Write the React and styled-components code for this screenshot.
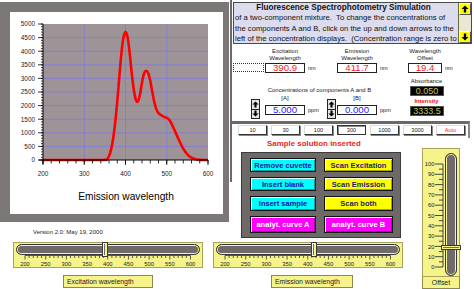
import React from "react";
import styled, { createGlobalStyle } from "styled-components";

const SANS = `"Liberation Sans", Arial, sans-serif`;

const Global = createGlobalStyle`
  html, body { margin: 0; padding: 0; background: #ffffff; }
  body { font-family: ${SANS}; color: #000; }
  * { box-sizing: border-box; }
`;

const Page = styled.div`
  width: 474px;
  height: 289px;
  overflow: hidden;
  display: grid;
  grid-template-columns: 213px 17px 181px 63px;
  grid-template-rows: 148px 92px 49px;
  grid-template-areas:
    "chart chart top top"
    "chart chart buttons offset"
    "exc em em offset";
`;

/* ---------- chart ---------- */
const ChartCell = styled.div`
  grid-area: chart;
  display: flex;
  flex-direction: column;
`;
const ChartFrame = styled.div`
  margin-top: 2px;
  width: 229px;
  height: 220px;
  background: #7b7777;
  padding: 10px 6px 8px 10px;
`;
const ChartInner = styled.div`
  width: 100%;
  height: 100%;
  background: #ffffff;
`;
const Version = styled.div`
  margin: 6px 0 0 33px;
  font: 6px/8px ${SANS};
  color: #222;
`;

const X0 = 33, X1 = 198, Y0 = 12, Y1 = 148;
const xs = (nm) => X0 + ((nm - 200) * (X1 - X0)) / 400;
const ys = (v) => Y1 - ((Y1 - Y0) * v) / 5000;

const curveData = [
  [200, 0], [340, 0], [350, 5], [355, 30], [360, 140], [365, 380], [370, 780], [375, 1380],
  [380, 2150], [385, 3050], [390, 3900], [395, 4500], [400, 4700], [405, 4520],
  [410, 3950], [415, 3200], [420, 2600], [425, 2220], [430, 2150], [435, 2400],
  [440, 2850], [445, 3180], [450, 3280], [455, 3200], [460, 2920], [465, 2500],
  [470, 2120], [475, 1860], [480, 1720], [490, 1610], [500, 1550], [505, 1490],
  [510, 1380], [520, 1060], [530, 720], [540, 420], [550, 210], [560, 85],
  [570, 25], [580, 4], [590, 0], [600, 0],
];

function smoothPath(pts) {
  const p = pts.map(([a, b]) => [xs(a), ys(b)]);
  let d = `M${p[0][0].toFixed(2)},${p[0][1].toFixed(2)}`;
  for (let i = 0; i < p.length - 1; i++) {
    const p0 = p[i - 1] || p[i];
    const p1 = p[i];
    const p2 = p[i + 1];
    const p3 = p[i + 2] || p2;
    const c1x = p1[0] + (p2[0] - p0[0]) / 6;
    const c1y = p1[1] + (p2[1] - p0[1]) / 6;
    const c2x = p2[0] - (p3[0] - p1[0]) / 6;
    const c2y = p2[1] - (p3[1] - p1[1]) / 6;
    d += ` C${c1x.toFixed(2)},${c1y.toFixed(2)} ${c2x.toFixed(2)},${c2y.toFixed(2)} ${p2[0].toFixed(2)},${p2[1].toFixed(2)}`;
  }
  return d;
}

function Chart() {
  const yMajor = [];
  for (let v = 0; v <= 5000; v += 500) yMajor.push(v);
  const yMinor = [];
  for (let v = 0; v <= 5000; v += 100) yMinor.push(v);
  const xMajor = [200, 300, 400, 500, 600];
  const xMinor = [];
  for (let n = 200; n <= 600; n += 20) xMinor.push(n);
  return (
    <svg width="213" height="202" viewBox="0 0 213 202" style={{ display: "block" }}>
      <rect x={X0} y={Y0} width={X1 - X0} height={Y1 - Y0} fill="#9e9498" />
      {yMajor.slice(1, -1).map((v) => (
        <line key={"gh" + v} x1={X0} x2={X1} y1={ys(v)} y2={ys(v)} stroke="#7d78d8" strokeWidth="0.8" />
      ))}
      {[300, 400, 500].map((n) => (
        <line key={"gv" + n} x1={xs(n)} x2={xs(n)} y1={Y0} y2={Y1} stroke="#7d78d8" strokeWidth="0.8" />
      ))}
      <path d={smoothPath(curveData)} fill="none" stroke="#ff0000" strokeWidth="2.6" strokeLinejoin="round" />
      <line x1={X0} x2={X0} y1={Y0} y2={Y1 + 4} stroke="#000" strokeWidth="1" />
      <line x1={X0 - 4} x2={X1} y1={Y1} y2={Y1} stroke="#000" strokeWidth="1" />
      {yMinor.map((v) => (
        <line key={"ym" + v} x1={X0 - 2} x2={X0} y1={ys(v)} y2={ys(v)} stroke="#000" strokeWidth="0.7" />
      ))}
      {yMajor.map((v) => (
        <line key={"yM" + v} x1={X0 - 5} x2={X0} y1={ys(v)} y2={ys(v)} stroke="#000" strokeWidth="0.8" />
      ))}
      {xMinor.map((n) => (
        <line key={"xm" + n} x1={xs(n)} x2={xs(n)} y1={Y1} y2={Y1 + 3.5} stroke="#000" strokeWidth="0.8" />
      ))}
      {xMajor.map((n) => (
        <line key={"xM" + n} x1={xs(n)} x2={xs(n)} y1={Y1} y2={Y1 + 5} stroke="#000" strokeWidth="0.8" />
      ))}
      <g fontFamily={SANS} fontSize="6.4" fill="#222">
        {yMajor.map((v) => (
          <text key={"yl" + v} x={X0 - 8} y={ys(v) + 2.3} textAnchor="end">{v}</text>
        ))}
        {xMajor.map((n) => (
          <text key={"xl" + n} x={xs(n)} y={164} textAnchor="middle">{n}</text>
        ))}
      </g>
      <text x="116" y="188" textAnchor="middle" fontFamily={SANS} fontSize="10.2" fill="#000">
        Emission wavelength
      </text>
    </svg>
  );
}

/* ---------- top right ---------- */
const TopCell = styled.div`
  grid-area: top;
  display: flex;
  flex-direction: column;
  padding-left: 3px;
  border-left: 2px solid #6d6a6a;
`;
const InfoBox = styled.div`
  margin-top: 2px;
  margin-left: -2px;
  width: 239px;
  height: 42px;
  display: flex;
  border: 1px solid #4a4a4a;
  background: #dcdcee;
`;
const InfoText = styled.div`
  flex: 1;
  overflow: hidden;
  padding-left: 1px;
  font: 7.7px/10.3px ${SANS};
  white-space: nowrap;
  color: #111;
`;
const InfoTitle = styled.div`
  font-weight: bold;
  font-size: 8.2px;
  text-align: center;
  padding-right: 6px;
`;
const ScrollBar = styled.div`
  width: 13px;
  display: flex;
  flex-direction: column;
  border-left: 1px solid #6a6a40;
  background: #ecebd2;
`;
const ScrollButton = styled.div`
  height: 12px;
  background: #ffff00;
  border: 1px solid #555;
  border-top-color: #fff;
  border-left-color: #fff;
  display: flex;
  align-items: center;
  justify-content: center;
`;
const ScrollTrack = styled.div`
  flex: 1;
  background: #e9e8d4;
`;

const Arrow = ({ down, size = 8 }) => (
  <svg width={size} height={size} viewBox="0 0 8 8" style={{ display: "block", transform: down ? "rotate(180deg)" : "none" }}>
    <path d="M4 0.5 L7.5 4 L5.2 4 L5.2 7.5 L2.8 7.5 L2.8 4 L0.5 4 Z" fill="#000" />
  </svg>
);

const ValuesArea = styled.div`
  display: flex;
  margin-top: 4px;
  margin-left: -2px;
  height: 73px;
`;
const LeftFields = styled.div`
  width: 174px;
  display: flex;
  flex-direction: column;
`;
const RightFields = styled.div`
  flex: 1;
  display: flex;
  flex-direction: column;
  padding-left: 1px;
`;
const FieldRow = styled.div`
  display: flex;
  align-items: flex-end;
`;
const DottedBox = styled.div`
  width: 31px;
  height: 9px;
  border: 1px dotted #333;
  margin-bottom: 1px;
`;
const Field = styled.div`
  display: grid;
  grid-template-columns: ${(p) => p.$box || 40}px auto;
  column-gap: 3px;
  align-items: center;
  width: ${(p) => (p.$w ? p.$w + "px" : "auto")};
  margin-left: ${(p) => p.$ml || 0}px;
`;
const FieldLabel = styled.div`
  grid-column: 1;
  justify-self: center;
  text-align: center;
  white-space: nowrap;
  font: 6px/7px ${SANS};
  color: #222;
  margin-bottom: ${(p) => p.$mb || 0}px;
`;
const ValueBox = styled.div`
  grid-column: 1;
  height: 10px;
  border: 1px solid #222;
  background: #fff;
  color: ${(p) => p.$color};
  font: 9.6px/8px ${SANS};
  text-align: center;
`;
const Unit = styled.div`
  grid-column: 2;
  font: 5.6px ${SANS};
  color: #222;
`;
const CenterNote = styled.div`
  text-align: center;
  font: 6px/8px ${SANS};
  color: #222;
  margin-top: 13px;
  padding-right: 1px;
`;
const Spinner = styled.div`
  width: 9px;
  height: 20px;
  display: flex;
  flex-direction: column;
  margin-left: ${(p) => p.$ml || 0}px;
  margin-right: ${(p) => p.$mr || 0}px;
  align-self: flex-start;
  margin-top: 4px;
`;
const SpinButton = styled.div`
  flex: 1;
  background: #e4e4e4;
  border: 1px solid #222;
  display: flex;
  align-items: center;
  justify-content: center;
  & + & { border-top: none; }
`;
const ConcRow = styled.div`
  display: flex;
  align-items: flex-start;
  margin-top: 1px;
`;
const SideLabel = styled.div`
  width: 35px;
  text-align: center;
  font: ${(p) => (p.$bold ? "bold " : "")}5.9px/7px ${SANS};
  color: ${(p) => p.$color || "#222"};
  margin-top: ${(p) => p.$mt || 0}px;
  margin-left: 1px;
`;
const Display = styled.div`
  width: 34px;
  height: 10px;
  margin-left: 2px;
  background: #000;
  border: 1px solid #555;
  color: #c8c462;
  font: 9px/8px ${SANS};
  text-align: center;
  margin-top: 1px;
`;

const RangeBar = styled.div`
  display: flex;
  gap: 4px;
  width: 240px;
  margin-left: -5px;
  padding: 1px 0 3px 6px;
  border-top: 3px solid #6b6868;
  border-left: 2px solid #6b6868;
  border-right: 2px solid #8a8787;
`;
const RangeButton = styled.div`
  width: 29px;
  height: 10px;
  background: #fff;
  border: 1px solid #333;
  border-top-color: ${(p) => (p.$pressed ? "#333" : "#ddd")};
  border-left-color: ${(p) => (p.$pressed ? "#333" : "#ddd")};
  box-shadow: ${(p) => (p.$pressed ? "inset 1px 1px 0 #888" : "1px 1px 0 #888")};
  font: 5.6px/8px ${SANS};
  color: ${(p) => (p.$red ? "#ff2020" : "#222")};
  text-align: center;
`;
const Status = styled.div`
  margin: 1px 0 0 32px;
  font: bold 7.9px/9px ${SANS};
  color: #ee1c1c;
`;

/* ---------- buttons ---------- */
const ButtonsCell = styled.div`
  grid-area: buttons;
  position: relative;
  padding: 4px 0 0 11px;
  &::before {
    content: "";
    position: absolute;
    left: 0;
    top: 0;
    width: 2px;
    height: 34px;
    background: #6d6a6a;
  }
`;
const ButtonPanel = styled.div`
  width: 160px;
  height: 86px;
  background: #6d6969;
  border: 1px solid #3d3b3b;
  display: grid;
  grid-template-columns: 66px 69px;
  grid-template-rows: 14px 14px 15px 17px;
  column-gap: 8px;
  row-gap: 5px;
  padding: 5px 0 0 8px;
`;
const ActionButton = styled.div`
  background: ${(p) => p.$bg};
  color: ${(p) => p.$fg};
  font: bold 7.5px ${SANS};
  border: 1px solid #111;
  box-shadow: inset 1px 1px 0 rgba(255, 255, 255, 0.85), inset -1px -1px 0 rgba(0, 0, 0, 0.35);
  display: flex;
  align-items: center;
  justify-content: center;
  white-space: nowrap;
`;

/* ---------- sliders ---------- */
const SLIDER_YELLOW = "#f6f38a";

const HCell = styled.div`
  grid-area: ${(p) => p.$area};
  padding: 2px 0 0 ${(p) => p.$pl}px;
  display: flex;
  flex-direction: column;
`;
const HPanel = styled.div`
  position: relative;
  width: 190px;
  height: 26px;
  background: ${SLIDER_YELLOW};
  border: 1px solid #a7a35a;
`;
const HTrack = styled.div`
  position: relative;
  margin: 1px 0 0 2px;
  width: 184px;
  height: 11px;
  border-radius: 6px;
  background: #6f6b6b;
  border: 1px solid #3a3838;
  box-shadow: inset 0 0 0 1px #f8f4a0;
`;
const HThumb = styled.div`
  position: absolute;
  top: -3px;
  width: 6px;
  height: 15px;
  background: ${SLIDER_YELLOW};
  border: 1px solid #3a3838;
  box-shadow: inset 1px 0 0 #fff;
  &::after {
    content: "";
    position: absolute;
    left: 1px;
    top: 1px;
    bottom: 1px;
    width: 1px;
    background: #6f6b6b;
  }
`;
const TabLabel = styled.div`
  margin: 7px 0 0 ${(p) => p.$ml}px;
  width: ${(p) => p.$w}px;
  height: 13px;
  background: ${SLIDER_YELLOW};
  border: 1px solid #8c8850;
  font: 6.9px/11px ${SANS};
  color: #222;
  padding-left: 3px;
  white-space: nowrap;
`;

function HScale() {
  const ticks = [];
  for (let n = 200; n <= 600; n += 10) ticks.push(n);
  const x = (n) => 11 + ((n - 200) * 165.5) / 400;
  return (
    <svg width="188" height="12" viewBox="0 0 188 12" style={{ display: "block" }}>
      {ticks.map((n) => (
        <line key={n} x1={x(n)} x2={x(n)} y1={0.5} y2={n % 50 === 0 ? 4.5 : 3} stroke="#333" strokeWidth="0.8" />
      ))}
      <line x1={x(200)} x2={x(600)} y1={0.5} y2={0.5} stroke="#333" strokeWidth="0.8" />
      <g fontFamily={SANS} fontSize="5.8" fill="#222">
        {[200, 250, 300, 350, 400, 450, 500, 550, 600].map((n) => (
          <text key={n} x={x(n)} y={11} textAnchor="middle">{n}</text>
        ))}
      </g>
    </svg>
  );
}

function HSlider({ area, pl, value, label, tabMl, tabW }) {
  const left = 9 + ((value - 200) * 165.5) / 400 - 3;
  return (
    <HCell $area={area} $pl={pl}>
      <HPanel>
        <HTrack>
          <HThumb style={{ left: `${left}px` }} />
        </HTrack>
        <HScale />
      </HPanel>
      <TabLabel $ml={tabMl} $w={tabW}>{label}</TabLabel>
    </HCell>
  );
}

const OffsetCell = styled.div`
  grid-area: offset;
  padding-left: 11px;
  display: flex;
  flex-direction: column;
`;
const VPanel = styled.div`
  position: relative;
  width: 38px;
  height: 129px;
  background: ${SLIDER_YELLOW};
  border: 1px solid #a7a35a;
  display: flex;
`;
const VTrack = styled.div`
  position: relative;
  margin: 4px 0 0 0;
  width: 12px;
  height: 123px;
  border-radius: 6px;
  background: #6f6b6b;
  border: 1px solid #3a3838;
  box-shadow: inset 0 0 0 1px #f8f4a0;
`;
const VThumb = styled.div`
  position: absolute;
  left: -5px;
  width: 20px;
  height: 5px;
  background: ${SLIDER_YELLOW};
  border: 1px solid #3a3838;
  &::after {
    content: "";
    position: absolute;
    left: 1px;
    right: 1px;
    top: 1px;
    height: 1px;
    background: #6f6b6b;
  }
`;
const OffsetLabel = styled.div`
  width: 38px;
  height: 12px;
  background: ${SLIDER_YELLOW};
  border: 1px solid #8c8850;
  border-top: none;
  font: 6.9px/11px ${SANS};
  color: #222;
  text-align: center;
`;

function VScale() {
  const y = (v) => 15 + ((100 - v) * 103) / 100;
  const labels = [];
  for (let v = 100; v >= 0; v -= 10) labels.push(v);
  const minors = [];
  for (let v = 95; v > 0; v -= 10) minors.push(v);
  return (
    <svg width="22" height="127" viewBox="0 0 22 127" style={{ display: "block" }}>
      {labels.map((v) => (
        <g key={v}>
          <line x1={12} x2={20} y1={y(v)} y2={y(v)} stroke="#333" strokeWidth="0.9" />
          <text x={11.5} y={y(v) + 2.1} textAnchor="end" fontFamily={SANS} fontSize="5.8" fill="#222">{v}</text>
        </g>
      ))}
      {minors.map((v) => (
        <line key={"m" + v} x1={16} x2={20} y1={y(v)} y2={y(v)} stroke="#333" strokeWidth="0.9" />
      ))}
      <line x1={20} x2={20} y1={y(100)} y2={y(0)} stroke="#333" strokeWidth="0.9" />
    </svg>
  );
}

export default function App() {
  const offset = 19.4;
  const thumbTop = 15 + ((100 - offset) * 103) / 100 - 4 - 3;
  return (
    <>
      <Global />
      <Page>
        <ChartCell>
          <ChartFrame>
            <ChartInner>
              <Chart />
            </ChartInner>
          </ChartFrame>
          <Version>Version 2.0: May 19, 2000</Version>
        </ChartCell>

        <TopCell>
          <InfoBox>
            <InfoText>
              <InfoTitle>Fluorescence Spectrophotometry Simulation</InfoTitle>
              of a two-component mixture.&nbsp; To change the concentrations of
              <br />
              the components A and B, click on the up and down arrows to the
              <br />
              left of the concentration displays.&nbsp; (Concentration range is zero to 10 ppm.)
            </InfoText>
            <ScrollBar>
              <ScrollButton><Arrow /></ScrollButton>
              <ScrollTrack />
              <ScrollButton><Arrow down /></ScrollButton>
            </ScrollBar>
          </InfoBox>

          <ValuesArea>
            <LeftFields>
              <FieldRow>
                <DottedBox />
                <Field $ml={1} $w={72}>
                  <FieldLabel $mb={1}>Excitation<br />Wavelength</FieldLabel>
                  <ValueBox $color="#ff1a1a">390.9</ValueBox>
                  <Unit>nm</Unit>
                </Field>
                <Field>
                  <FieldLabel $mb={1}>Emission<br />Wavelength</FieldLabel>
                  <ValueBox $color="#ff1a1a">411.7</ValueBox>
                  <Unit>nm</Unit>
                </Field>
              </FieldRow>
              <CenterNote>Concentrations of components A and B</CenterNote>
              <ConcRow>
                <Spinner $ml={18} $mr={5}>
                  <SpinButton><Arrow size={7} /></SpinButton>
                  <SpinButton><Arrow size={7} down /></SpinButton>
                </Spinner>
                <Field $w={62}>
                  <FieldLabel $mb={3}>[A]</FieldLabel>
                  <ValueBox $color="#1a1aff">5.000</ValueBox>
                  <Unit>ppm</Unit>
                </Field>
                <Spinner $mr={1}>
                  <SpinButton><Arrow size={7} /></SpinButton>
                  <SpinButton><Arrow size={7} down /></SpinButton>
                </Spinner>
                <Field>
                  <FieldLabel $mb={3}>[B]</FieldLabel>
                  <ValueBox $color="#1a1aff">0.000</ValueBox>
                  <Unit>ppm</Unit>
                </Field>
              </ConcRow>
            </LeftFields>
            <RightFields>
              <Field $box={34}>
                <FieldLabel $mb={1}>Wavelength<br />Offset</FieldLabel>
                <ValueBox $color="#ff1a1a">19.4</ValueBox>
                <Unit>nm</Unit>
              </Field>
              <SideLabel $mt={5}>Absorbance</SideLabel>
              <Display>0.050</Display>
              <SideLabel $mt={2} $bold $color="#ee1111">Intensity</SideLabel>
              <Display>3333.5</Display>
            </RightFields>
          </ValuesArea>

          <RangeBar>
            {["10", "30", "100", "300", "1000", "3000"].map((r) => (
              <RangeButton key={r} $pressed={r === "300"}>{r}</RangeButton>
            ))}
            <RangeButton $red>Auto</RangeButton>
          </RangeBar>
          <Status>Sample solution inserted</Status>
        </TopCell>

        <ButtonsCell>
          <ButtonPanel>
            <ActionButton $bg="#00ffff" $fg="#10109a">Remove cuvette</ActionButton>
            <ActionButton $bg="#ffff00" $fg="#1a1a6a">Scan Excitation</ActionButton>
            <ActionButton $bg="#00ffff" $fg="#10109a">Insert blank</ActionButton>
            <ActionButton $bg="#ffff00" $fg="#1a1a6a">Scan Emission</ActionButton>
            <ActionButton $bg="#00ffff" $fg="#10109a">Insert sample</ActionButton>
            <ActionButton $bg="#ffff00" $fg="#1a1a6a">Scan both</ActionButton>
            <ActionButton $bg="#ff00ff" $fg="#ffffff">analyt. curve A</ActionButton>
            <ActionButton $bg="#ff00ff" $fg="#ffffff">analyt. curve B</ActionButton>
          </ButtonPanel>
        </ButtonsCell>

        <OffsetCell>
          <VPanel>
            <VScale />
            <VTrack>
              <VThumb style={{ top: `${thumbTop}px` }} />
            </VTrack>
          </VPanel>
          <OffsetLabel>Offset</OffsetLabel>
        </OffsetCell>

        <HSlider area="exc" pl={13} value={390.9} label="Excitation wavelength" tabMl={50} tabW={90} />
        <HSlider area="em" pl={0} value={411.7} label="Emission wavelength" tabMl={58} tabW={82} />
      </Page>
    </>
  );
}
